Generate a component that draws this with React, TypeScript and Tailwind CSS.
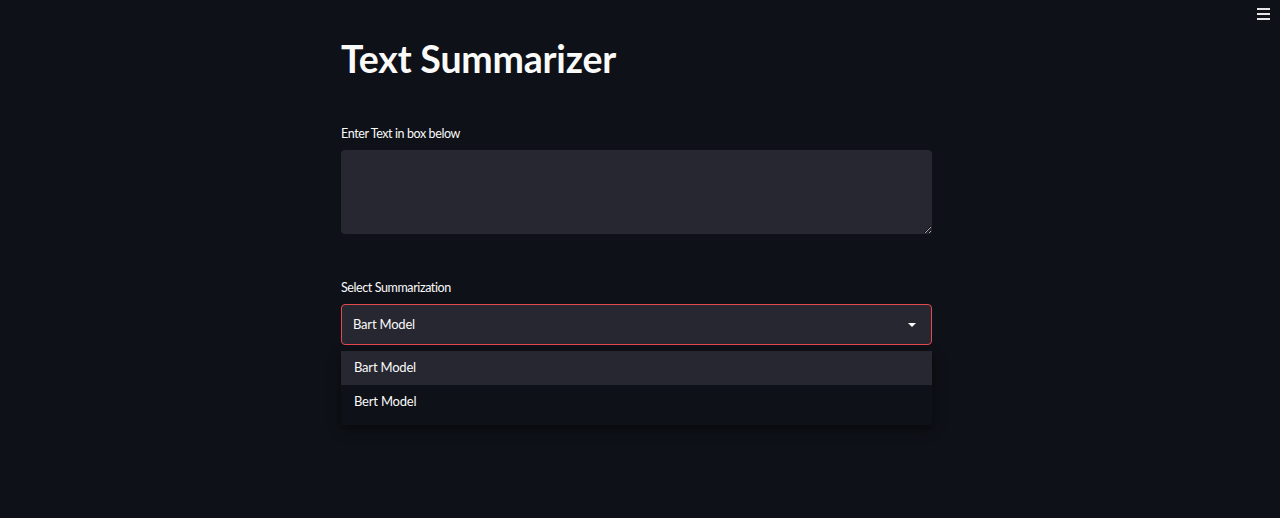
export default function App() {
  const options = ['Bart Model', 'Bert Model'];
  return (
    <div className="relative min-h-[518px] w-full bg-[#0e1117] text-[#fafafa]" style={{ fontFamily: 'Lato, "Noto Sans", sans-serif' }}>
      <button className="absolute right-[10px] top-[8px] flex flex-col gap-[3px] p-0">
        <span className="block h-[2px] w-[13px] bg-[#e6e6e6]" />
        <span className="block h-[2px] w-[13px] bg-[#e6e6e6]" />
        <span className="block h-[2px] w-[13px] bg-[#e6e6e6]" />
      </button>

      <div className="w-[932px] pl-[341px] pt-[37px]">
        <h1 className="text-[37.5px] font-bold leading-[44px] tracking-[-0.2px]">Text Summarizer</h1>

        <label className="mt-[44px] block text-[12.5px] leading-[18px] tracking-[-0.4px] text-[#fafafa]">Enter Text in box below</label>
        <textarea className="mt-[7px] block h-[84px] w-full resize-y rounded-[4px] bg-[#262730] px-3 py-2 text-[14px] outline-none" />

        <label className="mt-[45px] block text-[12.5px] leading-[18px] tracking-[-0.4px] text-[#fafafa]">Select Summarization</label>
        <div className="relative mt-[7px]">
          <div className="flex h-[41px] items-center justify-between rounded-[4px] border-[1.5px] border-[#e5484d] bg-[#262730] pl-[11px] pr-[14px]">
            <span className="text-[13px] tracking-[-0.2px]">Bart Model</span>
            <svg width="10" height="6" viewBox="0 0 10 6">
              <path d="M1 1h8L5 5z" fill="#fafafa" />
            </svg>
          </div>
          <ul className="mt-[6px] bg-[#0e1117] shadow-[0_4px_10px_rgba(0,0,0,0.5)] pb-[6px]">
            {options.map((o, i) => (
              <li
                key={o}
                className={`flex h-[34px] items-center pl-[13px] text-[13px] tracking-[-0.2px] ${i === 0 ? 'bg-[#262730]' : ''}`}
              >
                {o}
              </li>
            ))}
          </ul>
        </div>
      </div>
    </div>
  );
}
